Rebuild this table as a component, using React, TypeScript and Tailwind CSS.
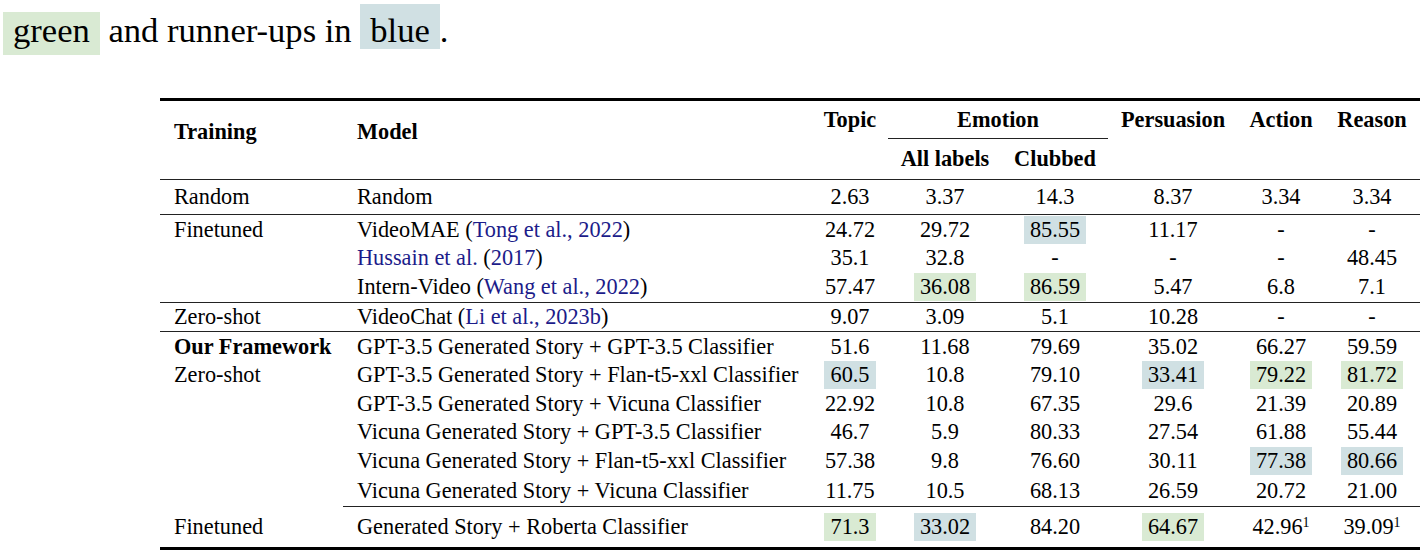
import React from "react";

const cols = "grid grid-cols-[185px_467px_76px_114px_106px_130px_86px_96px]";

type Mark = "g" | "b" | undefined;
type Cell = { v: React.ReactNode; m?: Mark };

const Cite = ({ children }: { children: React.ReactNode }) => (
  <span className="text-[#1c1c8a]">{children}</span>
);

function Val({ c }: { c: Cell }) {
  if (!c.m) return <span>{c.v}</span>;
  return (
    <span className={`inline-block px-[6px] leading-[28px] ${c.m === "g" ? "bg-[#d9ead3]" : "bg-[#d0e0e3]"}`}>
      {c.v}
    </span>
  );
}

function Row({ h, train, model, vals }: { h: string; train?: React.ReactNode; model: React.ReactNode; vals: Cell[] }) {
  return (
    <div className={`${cols} ${h} items-center leading-[28px]`}>
      <div className="pl-[14px]">{train}</div>
      <div className="pl-[12px] whitespace-nowrap">{model}</div>
      {vals.map((c, i) => (
        <div key={i} className="text-center whitespace-nowrap">
          <Val c={c} />
        </div>
      ))}
    </div>
  );
}

const v = (x: React.ReactNode, m?: Mark): Cell => ({ v: x, m });
const Rule = () => <div className="h-px bg-[#222]" />;

export default function App() {
  return (
    <div className="min-h-[555px] bg-white text-black font-['Liberation_Serif','Times_New_Roman',serif] overflow-hidden">
      {/* caption tail */}
      <div className="flex items-start pl-[3px] text-[34.6px] whitespace-pre h-[55px]">
        <div className="mt-[12px] h-[43px] px-[10px] pt-[4px] leading-[29px] bg-[#d9ead3]">green</div>
        <div className="mt-[14px] leading-[33px]">{" and runner-ups in "}</div>
        <div className="mt-[4px] h-[45px] px-[10px] pt-[4px] leading-[45px] bg-[#d0e0e3]">blue</div>
        <div className="mt-[14px] leading-[33px]">.</div>
      </div>

      <div className="mt-[43px] ml-[160px] w-[1260px] text-[22.3px]">
        <div className="h-[3px] bg-black" />

        {/* header */}
        <div className={`${cols} grid-rows-[37px_1px_40px] font-bold leading-[28px]`}>
          <div className="row-span-3 pl-[14px] pt-[17px]">Training</div>
          <div className="row-span-3 pl-[12px] pt-[17px]">Model</div>
          <div className="text-center self-center">Topic</div>
          <div className="col-span-2 text-center self-center">Emotion</div>
          <div className="text-center self-center">Persuasion</div>
          <div className="text-center self-center">Action</div>
          <div className="text-center self-center">Reason</div>
          <div className="col-start-3" />
          <div className="col-span-2 bg-[#222]" />
          <div className="col-span-3" />
          <div className="col-start-3" />
          <div className="text-center self-center">All labels</div>
          <div className="text-center self-center">Clubbed</div>
        </div>
        <Rule />

        <Row h="h-[34px]" train="Random" model="Random" vals={[v("2.63"), v("3.37"), v("14.3"), v("8.37"), v("3.34"), v("3.34")]} />
        <Rule />

        <Row h="h-[29px]" train="Finetuned" model={<>VideoMAE (<Cite>Tong et al., 2022</Cite>)</>}
          vals={[v("24.72"), v("29.72"), v("85.55", "b"), v("11.17"), v("-"), v("-")]} />
        <Row h="h-[28px]" model={<><Cite>Hussain et al.</Cite> (<Cite>2017</Cite>)</>}
          vals={[v("35.1"), v("32.8"), v("-"), v("-"), v("-"), v("48.45")]} />
        <Row h="h-[30px]" model={<>Intern-Video (<Cite>Wang et al., 2022</Cite>)</>}
          vals={[v("57.47"), v("36.08", "g"), v("86.59", "g"), v("5.47"), v("6.8"), v("7.1")]} />
        <Rule />

        <Row h="h-[28px]" train="Zero-shot" model={<>VideoChat (<Cite>Li et al., 2023b</Cite>)</>}
          vals={[v("9.07"), v("3.09"), v("5.1"), v("10.28"), v("-"), v("-")]} />
        <Rule />

        <Row h="h-[29px]" train={<b>Our Framework</b>} model="GPT-3.5 Generated Story + GPT-3.5 Classifier"
          vals={[v("51.6"), v("11.68"), v("79.69"), v("35.02"), v("66.27"), v("59.59")]} />
        <Row h="h-[28px]" train="Zero-shot" model="GPT-3.5 Generated Story + Flan-t5-xxl Classifier"
          vals={[v("60.5", "b"), v("10.8"), v("79.10"), v("33.41", "b"), v("79.22", "g"), v("81.72", "g")]} />
        <Row h="h-[29px]" model="GPT-3.5 Generated Story + Vicuna Classifier"
          vals={[v("22.92"), v("10.8"), v("67.35"), v("29.6"), v("21.39"), v("20.89")]} />
        <Row h="h-[28px]" model="Vicuna Generated Story + GPT-3.5 Classifier"
          vals={[v("46.7"), v("5.9"), v("80.33"), v("27.54"), v("61.88"), v("55.44")]} />
        <Row h="h-[29px]" model="Vicuna Generated Story + Flan-t5-xxl Classifier"
          vals={[v("57.38"), v("9.8"), v("76.60"), v("30.11"), v("77.38", "b"), v("80.66", "b")]} />
        <Row h="h-[31px]" model="Vicuna Generated Story + Vicuna Classifier"
          vals={[v("11.75"), v("10.5"), v("68.13"), v("26.59"), v("20.72"), v("21.00")]} />
        <div className="ml-[183px] h-px bg-[#222]" />

        <Row h="h-[40px]" train="Finetuned" model="Generated Story + Roberta Classifier"
          vals={[
            v("71.3", "g"), v("33.02", "b"), v("84.20"), v("64.67", "g"),
            v(<>42.96<sup className="text-[14px]">1</sup></>),
            v(<>39.09<sup className="text-[14px]">1</sup></>),
          ]} />
        <div className="h-[3px] bg-black" />
      </div>
    </div>
  );
}
